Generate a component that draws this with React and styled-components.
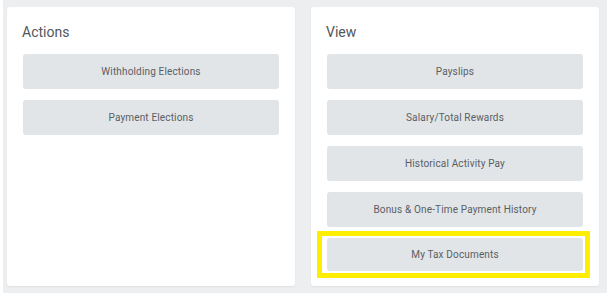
import React from "react";
import styled, { createGlobalStyle } from "styled-components";

const Global = createGlobalStyle`
  html, body { margin: 0; padding: 0; background: #ffffff; }
  body { font-family: Roboto, "Noto Sans", "Liberation Sans", sans-serif; }
`;

const Page = styled.div`
  margin-left: 3px;
  width: 604px;
  height: 293px;
  box-sizing: border-box;
  background: #edeef0;
  padding: 7px 8px 7px 4px;
  display: grid;
  grid-template-columns: 288px 288px;
  column-gap: 16px;
`;

const Card = styled.section`
  position: relative;
  background: #ffffff;
  border-radius: 3px;
  box-shadow: 0 1px 2px rgba(0, 0, 0, 0.06);
  padding: 16px 16px 0 16px;
  box-sizing: border-box;
  height: 279px;
`;

const Title = styled.h2`
  margin: 0 0 0 -1px;
  font-size: 14px;
  font-weight: 400;
  line-height: 18px;
  color: #53565a;
  height: 31px;
`;

const List = styled.div`
  display: flex;
  flex-direction: column;
  gap: 11px;
`;

const Button = styled.button`
  width: 256px;
  height: ${(p) => (p.$short ? 33 : 35)}px;
  border: none;
  border-radius: 3px;
  background: #e1e5e8;
  color: #5a5e64;
  font-family: Roboto, "Noto Sans", "Liberation Sans", sans-serif;
  font-size: 10px;
  letter-spacing: 0.15px;
  padding: 0;
  cursor: pointer;
`;

const Highlight = styled.div`
  position: absolute;
  left: 6px;
  top: 224px;
  width: 273px;
  height: 47px;
  box-sizing: border-box;
  border: 5px solid #ffee00;
  pointer-events: none;
`;

const actions = ["Withholding Elections", "Payment Elections"];
const views = [
  "Payslips",
  "Salary/Total Rewards",
  "Historical Activity Pay",
  "Bonus & One-Time Payment History",
  "My Tax Documents",
];

export default function App() {
  return (
    <>
      <Global />
      <Page>
        <Card>
          <Title>Actions</Title>
          <List>
            {actions.map((a) => (
              <Button key={a}>{a}</Button>
            ))}
          </List>
        </Card>
        <Card>
          <Title>View</Title>
          <List>
            {views.map((v, i) => (
              <Button key={v} $short={i === views.length - 1}>
                {v}
              </Button>
            ))}
          </List>
          <Highlight />
        </Card>
      </Page>
    </>
  );
}
